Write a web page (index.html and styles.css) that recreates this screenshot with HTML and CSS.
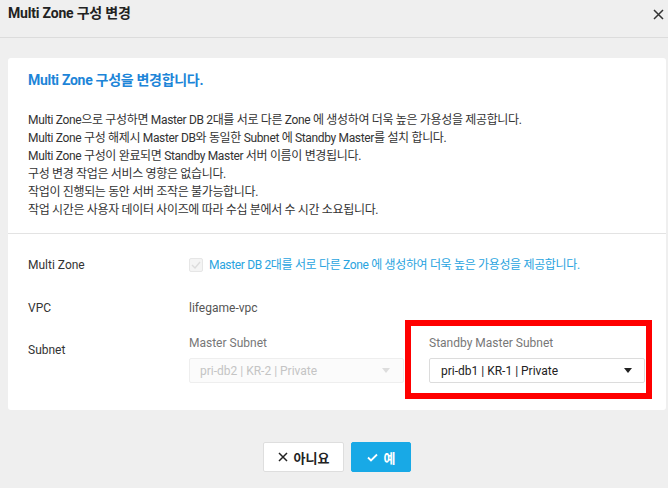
FILE: index.html
```html
<!DOCTYPE html>
<html lang="ko">

<head>
    <meta charset="UTF-8">
    <meta name="viewport" content="width=device-width, initial-scale=1.0">
    <title>Multi Zone 구성 변경</title>
    <link rel="stylesheet" href="styles.css">
</head>

<body>
    <header class="modal-header">
        <h1 class="modal-title">Multi Zone 구성 변경</h1>
        <button class="close-btn" type="button">
            <svg width="11" height="11" viewBox="0 0 11 11">
                <path d="M1 1 L10 10 M10 1 L1 10" stroke="#333" stroke-width="1.5" fill="none" />
            </svg>
        </button>
    </header>

    <div class="panel">
        <section class="intro">
            <h2 class="intro-title">Multi Zone 구성을 변경합니다.</h2>
            <p class="intro-text">
                Multi Zone으로 구성하면 Master DB 2대를 서로 다른 Zone 에 생성하여 더욱 높은 가용성을 제공합니다.<br>
                Multi Zone 구성 해제시 Master DB와 동일한 Subnet 에 Standby Master를 설치 합니다.<br>
                Multi Zone 구성이 완료되면 Standby Master 서버 이름이 변경됩니다.<br>
                구성 변경 작업은 서비스 영향은 없습니다.<br>
                작업이 진행되는 동안 서버 조작은 불가능합니다.<br>
                작업 시간은 사용자 데이터 사이즈에 따라 수십 분에서 수 시간 소요됩니다.
            </p>
        </section>

        <section class="form">
            <div class="row row-zone">
                <div class="label">Multi Zone</div>
                <div class="value check-wrap">
                    <span class="checkbox">
                        <svg width="10" height="8" viewBox="0 0 10 8">
                            <path d="M1 4 L4 7 L9 1" stroke="#dcdcdc" stroke-width="1.4" fill="none" />
                        </svg>
                    </span>
                    <span class="check-text">Master DB 2대를 서로 다른 Zone 에 생성하여 더욱 높은 가용성을 제공합니다.</span>
                </div>
            </div>
            <div class="row row-vpc">
                <div class="label">VPC</div>
                <div class="value vpc">lifegame-vpc</div>
            </div>
            <div class="row row-subnet">
                <div class="label subnet-label">Subnet</div>
                <div class="subnets">
                    <div class="subnet-col">
                        <div class="sub-label">Master Subnet</div>
                        <div class="select disabled">
                            <span>pri-db2 | KR-2 | Private</span>
                            <span class="arrow"></span>
                        </div>
                    </div>
                    <div class="subnet-col standby">
                        <div class="sub-label">Standby Master Subnet</div>
                        <div class="select">
                            <span>pri-db1 | KR-1 | Private</span>
                            <span class="arrow"></span>
                        </div>
                        <div class="highlight"></div>
                    </div>
                </div>
            </div>
        </section>
    </div>

    <footer class="actions">
        <button class="btn btn-no" type="button">
            <svg width="10" height="10" viewBox="0 0 10 10">
                <path d="M1 1 L9 9 M9 1 L1 9" stroke="#222" stroke-width="1.5" fill="none" />
            </svg>
            아니요
        </button>
        <button class="btn btn-yes" type="button">
            <svg width="11" height="9" viewBox="0 0 11 9">
                <path d="M1 4.5 L4 7.5 L10 1.5" stroke="#fff" stroke-width="1.8" fill="none" />
            </svg>
            예
        </button>
    </footer>
</body>

</html>
```

FILE: styles.css
```css
* {
    margin: 0;
    padding: 0;
    box-sizing: border-box;
}

body {
    background: #efefef;
    font-family: Roboto, "Noto Sans CJK KR", sans-serif;
    color: #333;
    font-size: 12px;
    width: 668px;
    height: 488px;
    overflow: hidden;
}

.modal-header {
    display: flex;
    justify-content: space-between;
    align-items: flex-start;
    height: 38px;
    padding: 4px 2px 0 8px;
    border-bottom: 1px solid #dcdcdc;
}

.modal-title {
    font-size: 14px;
    line-height: 18px;
    font-weight: 700;
    color: #222;
    letter-spacing: -0.2px;
}

.close-btn {
    border: 0;
    background: none;
    width: 11px;
    height: 11px;
    margin-top: 5px;
    margin-right: 2px;
    display: flex;
}

.panel {
    background: #fff;
    margin: 20px 2px 0 8px;
    border-radius: 3px;
    height: 352px;
}

.intro {
    padding: 12px 20px 14px;
    border-bottom: 1px solid #e3e3e3;
}

.intro-title {
    font-size: 14px;
    line-height: 20px;
    font-weight: 700;
    color: #1d85d8;
    letter-spacing: -0.3px;
}

.intro-text {
    margin-top: 21px;
    line-height: 18px;
    font-size: 12px;
    color: #333;
    letter-spacing: -0.34px;
}

.form {
    padding: 21px 21px 0 20px;
}

.row {
    display: flex;
    line-height: 20px;
}

.label {
    width: 161px;
    flex-shrink: 0;
    color: #333;
}

.row-vpc {
    margin-top: 23px;
}

.row-subnet {
    margin-top: 15px;
}

.subnet-label {
    padding-top: 7px;
}

.check-wrap {
    display: flex;
    align-items: center;
}

.checkbox {
    width: 14px;
    height: 14px;
    border: 1px solid #e6e6e6;
    background: #f4f4f4;
    border-radius: 2px;
    display: flex;
    align-items: center;
    justify-content: center;
    margin-right: 6px;
}

.check-text {
    color: #2aa4e0;
    letter-spacing: -0.34px;
}

.vpc {
    color: #555;
}

.subnets {
    display: flex;
    gap: 25px;
}

.subnet-col {
    width: 215px;
    position: relative;
}

.standby {
    width: 216px;
}

.sub-label {
    color: #777;
    line-height: 20px;
}

.select {
    margin-top: 5px;
    height: 25px;
    border: 1px solid #dcdcdc;
    border-radius: 2px;
    display: flex;
    justify-content: space-between;
    align-items: center;
    padding: 0 12px 0 11px;
    color: #222;
}

.select.disabled {
    border-color: #eee;
    background: #fbfbfb;
    color: #c4c4c4;
    padding-left: 10px;
}

.arrow {
    width: 0;
    height: 0;
    border-left: 4px solid transparent;
    border-right: 4px solid transparent;
    border-top: 5px solid #222;
}

.disabled .arrow {
    border-top-color: #ddd;
    margin-right: 1px;
}

.highlight {
    position: absolute;
    left: -24px;
    top: -13px;
    width: 247px;
    height: 79px;
    border: 6px solid #ff0000;
}

.actions {
    display: flex;
    justify-content: center;
    gap: 7px;
    margin-top: 32px;
    padding-left: 6px;
}

.btn {
    height: 30px;
    display: flex;
    align-items: center;
    justify-content: center;
    gap: 6px;
    font-family: Roboto, "Noto Sans CJK KR", sans-serif;
    font-size: 13px;
    font-weight: 700;
    border-radius: 2px;
}

.btn-no {
    width: 81px;
    background: #fff;
    border: 1px solid #dedede;
    color: #222;
}

.btn-yes {
    width: 60px;
    background: #18a9e6;
    border: 1px solid #18a9e6;
    color: #fff;
}
```
